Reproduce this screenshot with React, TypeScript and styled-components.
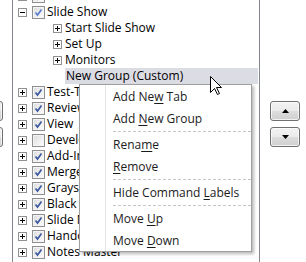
import React from "react";
import styled, { createGlobalStyle } from "styled-components";

const GlobalStyle = createGlobalStyle`
  html, body { margin: 0; padding: 0; background: #fff; }
  body {
    font-family: "Segoe UI", "Open Sans", "Noto Sans", sans-serif;
    font-size: 12px;
    color: #000;
  }
`;

const Stage = styled.div`
  position: relative;
  width: 306px;
  height: 262px;
  overflow: hidden;
  display: flex;
  background: #fff;
`;

const SideColumn = styled.div<{ $width: number; $pad: number }>`
  width: ${(p) => p.$width}px;
  flex: none;
  display: flex;
  flex-direction: column;
  gap: 6px;
  padding-top: 101px;
  padding-left: ${(p) => p.$pad}px;
  box-sizing: border-box;
`;

const PushButton = styled.div<{ $offset?: number }>`
  width: 30px;
  height: 20px;
  margin-left: ${(p) => p.$offset ?? 0}px;
  box-sizing: border-box;
  border: 1px solid #707070;
  border-radius: 3px;
  background: linear-gradient(#f2f2f2 0%, #ebebeb 50%, #dddddd 50%, #cfcfcf 100%);
  box-shadow: inset 0 0 0 1px rgba(255, 255, 255, 0.7);
  display: flex;
  align-items: center;
  justify-content: center;
  svg { display: block; }
`;

const TreePanel = styled.div`
  width: 248px;
  flex: none;
  box-sizing: border-box;
  border-left: 1px solid #828790;
  border-right: 1px solid #828790;
  overflow: hidden;
`;

const TreeList = styled.div`
  margin-top: -12px;
  display: flex;
  flex-direction: column;
`;

const Row = styled.div<{ $indent: number }>`
  height: 16px;
  display: flex;
  align-items: center;
  padding-left: ${(p) => p.$indent}px;
  white-space: nowrap;
`;

const ExpanderBox = styled.span`
  width: 9px;
  height: 9px;
  flex: none;
  display: flex;
  svg { display: block; }
`;

const CheckBox = styled.span`
  width: 13px;
  height: 13px;
  flex: none;
  margin-left: 5px;
  box-sizing: border-box;
  border: 1px solid #8e8f8f;
  background: linear-gradient(135deg, #dcdcdc 0%, #f4f4f4 70%, #ffffff 100%);
  box-shadow: inset 0 0 0 1px #f4f4f4;
  display: flex;
  align-items: center;
  justify-content: center;
  svg { display: block; }
`;

const Label = styled.span<{ $gap: number; $selected?: boolean }>`
  margin-left: ${(p) => p.$gap}px;
  line-height: 16px;
  ${(p) =>
    p.$selected
      ? `flex: 1; margin-right: 1px; background: #dcdce4; padding-left: 1px;`
      : ``}
`;

const Menu = styled.div`
  position: absolute;
  left: 79px;
  top: 84px;
  width: 173px;
  box-sizing: border-box;
  border: 1px solid #a0a0a0;
  background: #fff;
  box-shadow: 2px 2px 3px rgba(0, 0, 0, 0.28);
  display: flex;
`;

const Gutter = styled.div`
  width: 25px;
  flex: none;
  border-right: 1px solid #e2e3e3;
`;

const MenuList = styled.div`
  flex: 1;
  display: flex;
  flex-direction: column;
`;

const MenuItem = styled.div`
  height: 22px;
  display: flex;
  align-items: center;
  padding-left: 7px;
  color: #1b1b1b;
  white-space: pre;
  u {
    text-decoration: underline;
    text-underline-offset: 2px;
  }
`;

const Separator = styled.div`
  height: 4px;
  display: flex;
  align-items: center;
  padding-left: 7px;
  &::after {
    content: "";
    flex: 1;
    height: 1px;
    background-image: repeating-linear-gradient(
      to right,
      #c5c5c5 0,
      #c5c5c5 3px,
      transparent 3px,
      transparent 5px
    );
  }
`;

const Cursor = styled.svg`
  position: absolute;
  left: 209px;
  top: 75px;
`;

const Expander = ({ open }: { open?: boolean }) => (
  <ExpanderBox>
    <svg width="9" height="9" viewBox="0 0 9 9">
      <rect x="0.5" y="0.5" width="8" height="8" fill="#fff" stroke="#919191" />
      <path d="M2 4.5h5" stroke="#000" />
      {!open && <path d="M4.5 2v5" stroke="#000" />}
    </svg>
  </ExpanderBox>
);

const Check = ({ checked, light }: { checked: boolean; light?: boolean }) => (
  <CheckBox>
    {checked && (
      <svg width="11" height="11" viewBox="0 0 11 11">
        <path
          d="M2.5 5.5 L4.5 8 L8.5 2.5"
          fill="none"
          stroke={light ? "#5b80cf" : "#3c5a9f"}
          strokeWidth="1.7"
        />
      </svg>
    )}
  </CheckBox>
);

type TreeRow =
  | { kind: "tab"; label: string; checked: boolean; open?: boolean; light?: boolean }
  | { kind: "child"; label: string }
  | { kind: "group"; label: string };

const rows: TreeRow[] = [
  { kind: "tab", label: "Animations", checked: true },
  { kind: "tab", label: "Slide Show", checked: true, open: true, light: true },
  { kind: "child", label: "Start Slide Show" },
  { kind: "child", label: "Set Up" },
  { kind: "child", label: "Monitors" },
  { kind: "group", label: "New Group (Custom)" },
  { kind: "tab", label: "Test-Tab", checked: true },
  { kind: "tab", label: "Review", checked: true },
  { kind: "tab", label: "View", checked: true },
  { kind: "tab", label: "Developer", checked: false },
  { kind: "tab", label: "Add-Ins", checked: true },
  { kind: "tab", label: "Merge", checked: true },
  { kind: "tab", label: "Grayscale", checked: true },
  { kind: "tab", label: "Black And White", checked: true },
  { kind: "tab", label: "Slide Master", checked: true },
  { kind: "tab", label: "Handout Master", checked: true },
  { kind: "tab", label: "Notes Master", checked: true },
  { kind: "tab", label: "Background Removal", checked: true },
];

type MenuEntry = { sep: true } | { before: string; key: string; after: string };

const menu: MenuEntry[] = [
  { before: "Add Ne", key: "w", after: " Tab" },
  { before: "Add ", key: "N", after: "ew Group" },
  { sep: true },
  { before: "Rena", key: "m", after: "e" },
  { before: "", key: "R", after: "emove" },
  { sep: true },
  { before: "Hide Command ", key: "L", after: "abels" },
  { sep: true },
  { before: "Move ", key: "U", after: "p" },
  { before: "Move ", key: "D", after: "own" },
];

const Triangle = ({ up }: { up?: boolean }) => (
  <svg width="7" height="4" viewBox="0 0 7 4">
    <path d={up ? "M0 4 L3.5 0 L7 4 Z" : "M0 0 L7 0 L3.5 4 Z"} fill="#000" />
  </svg>
);

export default function App() {
  return (
    <>
      <GlobalStyle />
      <Stage>
        <SideColumn $width={12} $pad={0}>
          <PushButton $offset={-27} />
          <PushButton $offset={-27} />
        </SideColumn>
        <TreePanel>
          <TreeList>
            {rows.map((r, i) => {
              if (r.kind === "tab")
                return (
                  <Row key={i} $indent={5}>
                    <Expander open={r.open} />
                    <Check checked={r.checked} light={r.light} />
                    <Label $gap={2}>{r.label}</Label>
                  </Row>
                );
              if (r.kind === "child")
                return (
                  <Row key={i} $indent={40}>
                    <Expander />
                    <Label $gap={3}>{r.label}</Label>
                  </Row>
                );
              return (
                <Row key={i} $indent={52}>
                  <Label $gap={0} $selected>
                    {r.label}
                  </Label>
                </Row>
              );
            })}
          </TreeList>
        </TreePanel>
        <SideColumn $width={46} $pad={10}>
          <PushButton>
            <Triangle up />
          </PushButton>
          <PushButton>
            <Triangle />
          </PushButton>
        </SideColumn>
        <Menu>
          <Gutter />
          <MenuList>
            {menu.map((m, i) =>
              "sep" in m ? (
                <Separator key={i} />
              ) : (
                <MenuItem key={i}>
                  <span>
                    {m.before}
                    <u>{m.key}</u>
                    {m.after}
                  </span>
                </MenuItem>
              )
            )}
          </MenuList>
        </Menu>
        <Cursor width="13" height="21" viewBox="0 0 13 21">
          <path
            d="M1.5 1.5 L1.5 17.5 L5.5 13.5 L8.5 19.5 L10.5 18.5 L7.5 12.5 L12.5 12.5 Z"
            fill="#fff"
            stroke="#000"
            strokeLinejoin="miter"
          />
        </Cursor>
      </Stage>
    </>
  );
}
